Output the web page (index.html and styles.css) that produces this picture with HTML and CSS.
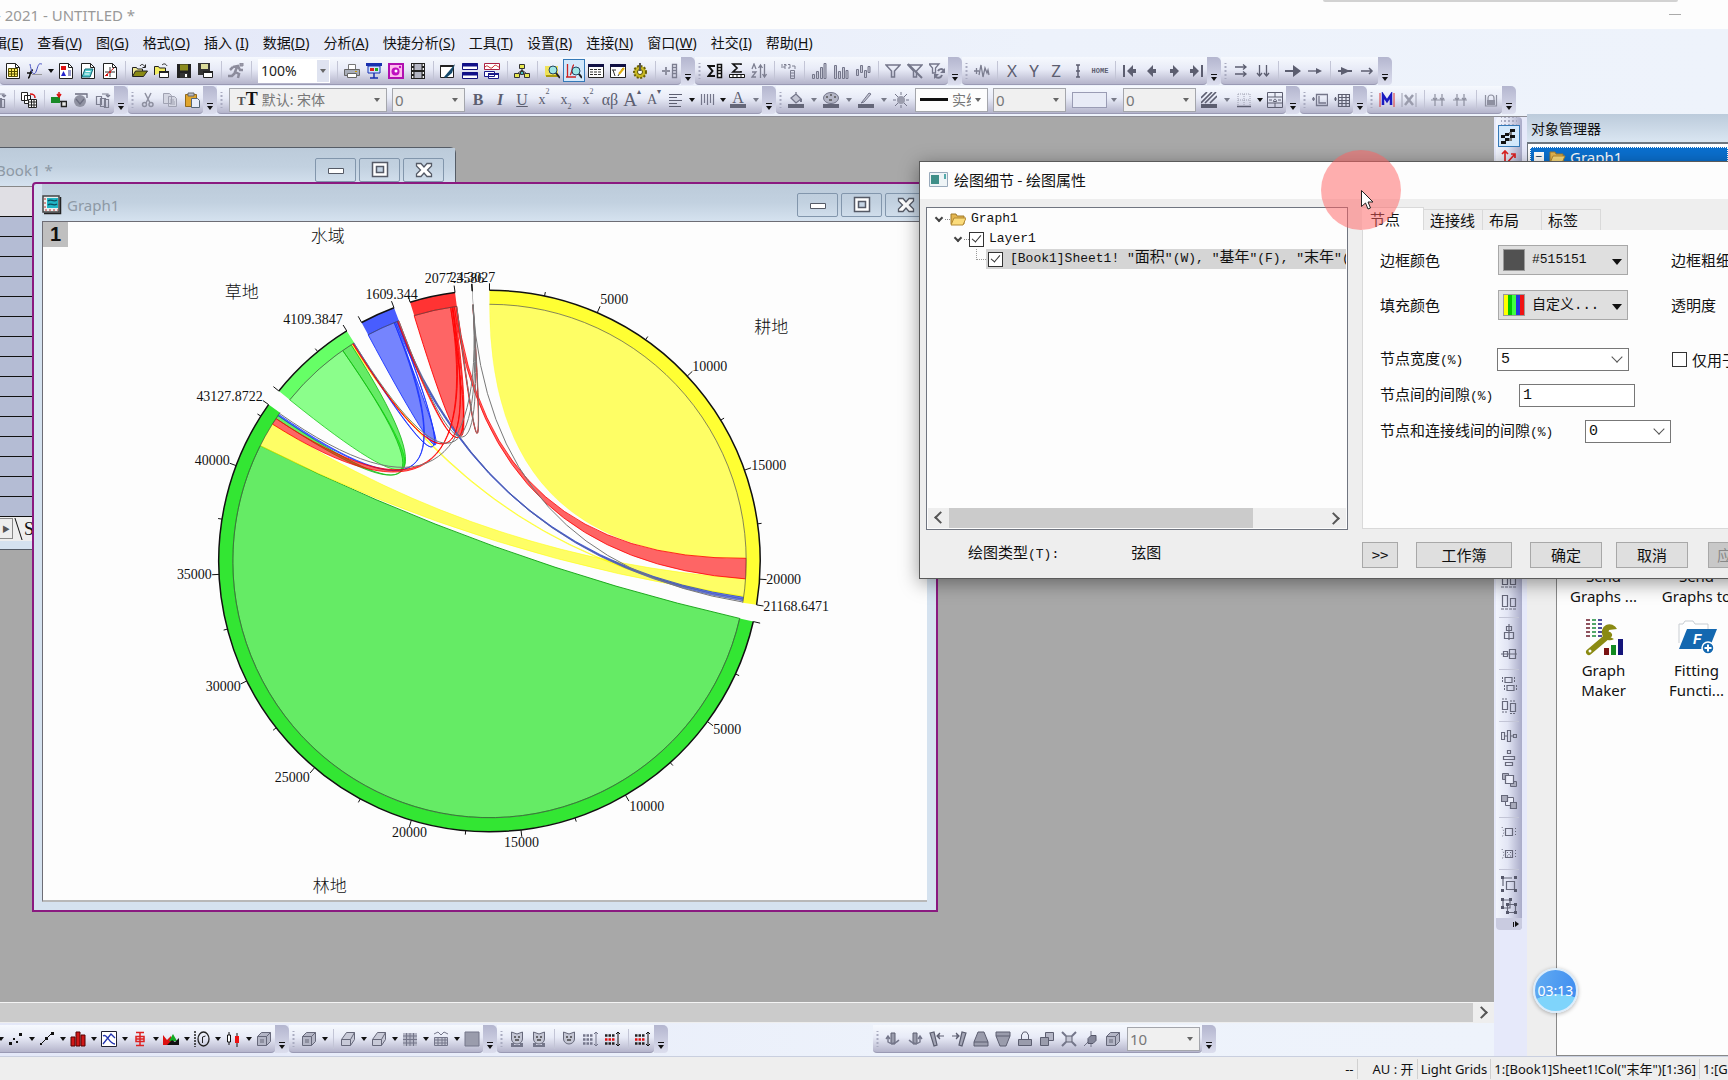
FILE: index.html
```html
<!DOCTYPE html>
<html lang="zh-CN">
<head>
<meta charset="utf-8">
<title>2021 - UNTITLED *</title>
<link rel="stylesheet" href="styles.css">
</head>
<body>
<svg class="defs" aria-hidden="true">
  <symbol id="page" viewBox="0 0 16 16"><path d="M1.5.5h9l4 4v11h-13z" fill="#fff" stroke="#222"/><path d="M10.5.5v4h4" fill="none" stroke="#222"/></symbol>
  <symbol id="grid" viewBox="0 0 16 16"><use href="#page"/><path d="M3.5 5.500h9v8h-9zM3.500 8.500h9M3.500 11h9M6.500 5.500v8M9.500 5.500v8" fill="#ffee60" stroke="#554d00"/></symbol>
  <symbol id="fx" viewBox="0 0 16 16"><path d="M1 15c3 0 1-8 5-8M0 10h5" fill="none" stroke="#111" stroke-width="1.500"/><path d="M3 1c2 12 5 12 7 5s3-5 5-5" fill="none" stroke="#4650c0"/><path d="M5 11.500h10" stroke="#999"/></symbol>
  <symbol id="docr" viewBox="0 0 16 16"><use href="#page"/><path d="M3 3h5v4H3z" fill="#d11"/><path d="M3 13l2.500-5L8 13z" fill="#22c"/><path d="M10 8h3M10 10h3M10 12h3" stroke="#339"/></symbol>
  <symbol id="docc" viewBox="0 0 16 16"><use href="#page"/><path d="M5 6h8l-3 8H2z" fill="#5cc" stroke="#167"/><path d="M5.500 8.500h5M4.500 11h5" stroke="#fff"/></symbol>
  <symbol id="docp" viewBox="0 0 16 16"><use href="#page"/><path d="M3 13L12 5" stroke="#b22"/><path d="M8 4v10M3 9h10" stroke="#333"/><path d="M4 11h2v2H4zM7 8h2v2H7z" fill="#d11"/></symbol>
  <symbol id="open" viewBox="0 0 16 16"><path d="M.5 13V4.500h4l1 1.500h5v2" fill="#f2ec9a" stroke="#222"/><path d="M.5 13.500l3-5.500h12l-4 5.500z" fill="#8a8a14" stroke="#222"/><path d="M8 3c2-3 4-1 5 1M13.500 1.500V4.500h-3" fill="none" stroke="#222"/></symbol>
  <symbol id="open2" viewBox="0 0 16 16"><path d="M.5 12V3.500h4l1 1.500h6v3" fill="#f2ec60" stroke="#222"/><path d="M5.500 8.500h9v6h-9z" fill="#fff" stroke="#222"/><path d="M5 9h10" stroke="#222" stroke-width="2"/><path d="M8 2c2-2 4-1 5 1" fill="none" stroke="#222"/></symbol>
  <symbol id="save" viewBox="0 0 16 16"><path d="M1 1h14v14H1z" fill="#222"/><path d="M4 1.500h8v6H4z" fill="#8c8c20"/><path d="M4 10h8v5H4z" fill="#333"/><path d="M9 11h2v3H9z" fill="#fff"/></symbol>
  <symbol id="save2" viewBox="0 0 16 16"><path d="M0 0h12v12H0z" fill="#333"/><path d="M3 1h7v5H3z" fill="#d9da9a"/><path d="M5.500 8.500h9v6h-9z" fill="#fff" stroke="#222"/><path d="M5 9h10" stroke="#222" stroke-width="2"/></symbol>
  <symbol id="run" viewBox="0 0 16 16"><path d="M12 0h3v3h-3z" fill="#9a9aa8" stroke="#8c8c9c"/><path d="M5 4l5-1 2 4h3M9 4L7 9l4 2-1 4M7 10l-3 3H0M2 7l3-3" fill="none" stroke="#8c8c9c" stroke-width="2.500"/></symbol>
  <symbol id="print" viewBox="0 0 16 16"><path d="M4.500 6V1.500h7V6" fill="#fff" stroke="#777"/><path d="M.5 6.500h15v6H.5z" fill="#a8adb8" stroke="#666"/><path d="M3.500 10.500h9v4h-9z" fill="#fff" stroke="#666"/><path d="M11 8h2v1h-2z" fill="#c90"/></symbol>
  <symbol id="slide" viewBox="0 0 16 16"><path d="M0 1.500h16" stroke="#1830b0" stroke-width="3"/><path d="M2 3h12v7H2z" fill="#cfe4ff" stroke="#1830b0"/><path d="M4 5h4v3H4z" fill="#d22"/><path d="M9 5h3v3H9z" fill="#2a2"/><path d="M8 10v5M4 15h8" stroke="#1830b0" stroke-width="1.500"/></symbol>
  <symbol id="pink" viewBox="0 0 16 16"><path d="M1 1h14v14H1z" fill="#fbe" stroke="#b010b0" stroke-width="2"/><circle cx="7.500" cy="8.500" r="4" fill="#c010c0"/><circle cx="8" cy="8" r="1.500" fill="#fff"/><circle cx="12" cy="4" r="1.200" fill="#c010c0"/></symbol>
  <symbol id="film" viewBox="0 0 16 16"><path d="M1 0h14v16H1z" fill="#222"/><path d="M4.500 1h7v6h-7zM4.500 9h7v6h-7z" fill="#b4b6c4"/><path d="M2.700 1v15M13.300 1v15" stroke="#fff" stroke-width="1.300" stroke-dasharray="2 2"/></symbol>
  <symbol id="pen" viewBox="0 0 16 16"><path d="M.5 2.500h13v12H.5z" fill="#fff" stroke="#222"/><path d="M.5 3h13" stroke="#222" stroke-width="2"/><path d="M4 14L15 1l-3 9-6 5z" fill="#154a6c"/></symbol>
  <symbol id="bars" viewBox="0 0 16 16"><path d="M.5.500h15v6H.5zM.5 9.500h15v6H.5z" fill="#fff" stroke="#11117a"/><path d="M0 2h16M0 11h16" stroke="#11118a" stroke-width="3"/></symbol>
  <symbol id="waves" viewBox="0 0 16 16"><path d="M.5.500h15v6H.5z" fill="#fff" stroke="#a24"/><path d="M1 4c3-4 5 4 8 0s4 0 6 0" fill="none" stroke="#c33"/><path d="M.5 8.500h10v5H.5zM4.500 10.500h10v5h-10z" fill="#fff" stroke="#1a1a8a"/><path d="M4 11h11" stroke="#1a1a8a" stroke-width="2"/></symbol>
  <symbol id="org" viewBox="0 0 16 16"><path d="M8 4v4M3 11l5-4 5 4" stroke="#333" fill="none"/><path d="M5.500 1.500h5v4h-5zM.5 10.500h5v4h-5zM10.500 10.500h5v4h-5z" fill="#e8e850" stroke="#333"/><path d="M6.500 8.500h3v3h-3z" fill="#4bb" stroke="#333"/></symbol>
  <symbol id="find" viewBox="0 0 16 16"><path d="M1 3h13v10H1z" fill="#efe25a"/><path d="M2 13h12" stroke="#aa9a10" stroke-width="2"/><circle cx="9" cy="7" r="4" fill="#9fe6e6" stroke="#246"/><path d="M12 10l4 5" stroke="#222" stroke-width="2"/></symbol>
  <symbol id="findp" viewBox="0 0 16 16"><path d="M1.500 1v13M0 14h10M4 12c2-1 2-10 4-10" fill="none" stroke="#c22" stroke-width="1.300"/><circle cx="10" cy="8" r="4" fill="#9fe6e6" stroke="#246"/><path d="M13 11l3 4" stroke="#222" stroke-width="2"/></symbol>
  <symbol id="list" viewBox="0 0 16 16"><path d="M.5 1.500h15v13H.5z" fill="#fff" stroke="#222"/><path d="M0 2.500h16" stroke="#114" stroke-width="3"/><path d="M2 6.500h12M2 9h12M2 11.500h12" stroke="#333" stroke-dasharray="3 1"/></symbol>
  <symbol id="listp" viewBox="0 0 16 16"><path d="M.5 1.500h15v13H.5z" fill="#fff" stroke="#222"/><path d="M0 2.500h16" stroke="#114" stroke-width="3"/><path d="M2 7h4M3 7l2 6M8 13l5-8" stroke="#333"/><path d="M9 11l5-6" stroke="#e0b010" stroke-width="2"/></symbol>
  <symbol id="gear" viewBox="0 0 16 16"><circle cx="8" cy="9" r="6" fill="#c8b820" stroke="#6a6008" stroke-width="2" stroke-dasharray="2 1.500"/><circle cx="8" cy="9" r="2.500" fill="#fff" stroke="#554d00"/><path d="M8 0v8" stroke="#555" stroke-width="2"/></symbol>
  <symbol id="addcol" viewBox="0 0 16 16"><path d="M0 8h8M4 4v8" stroke="#8e90a0" stroke-width="2"/><path d="M10.500 1.500h4v13h-4zM10.500 4.500h4M10.500 7.500h4M10.500 10.500h4" fill="none" stroke="#7c7e90" stroke-width="1.300"/></symbol>
  <symbol id="sumc" viewBox="0 0 16 16"><path d="M8 3H1.500l4 5-4 5H8" fill="none" stroke="#111" stroke-width="2"/><path d="M10.500 1.500h4v13h-4zM10.500 4.500h4M10.500 7.500h4M10.500 10.500h4" fill="#fff" stroke="#111" stroke-width="1.500"/></symbol>
  <symbol id="sumr" viewBox="0 0 16 16"><path d="M12 2V1H4l4 4-4 4h8V8" fill="none" stroke="#111" stroke-width="1.700"/><path d="M.5 11.500h15v3H.5zM4 11v4M8 11v4M12 11v4" fill="#fff" stroke="#111"/></symbol>
  <symbol id="sort" viewBox="0 0 16 16"><path d="M1 6l2-5 2 5M1 9h4L1 14h4M9.500 2v13M7.500 5l2-3 2 3M13.500 1v13M11.500 11l2 3 2-3" fill="none" stroke="#7c7e90" stroke-width="1.300"/></symbol>
  <symbol id="num" viewBox="0 0 16 16"><path d="M1 1v4M3 1.500h2v1.500H3V5h2M7 1.500h2V5H7M11 3h3v3" fill="none" stroke="#7c7e90"/><path d="M9.500 7.500h4v8h-4zM9.500 10h4M9.500 13h4" fill="none" stroke="#7c7e90"/></symbol>
  <symbol id="hist" viewBox="0 0 16 16"><path d="M1.500 11.500h2v4h-2zM5.500 8.500h2v7h-2zM9.500 4.500h2v11h-2zM13 .5h2v15h-2z" fill="#c4c6d4" stroke="#74768a"/></symbol>
  <symbol id="hist2" viewBox="0 0 16 16"><path d="M1.500 2.500h2v13h-2zM5.500 8.500h2v7h-2zM9.500 4.500h2v11h-2zM13 7.500h2v8h-2z" fill="#c4c6d4" stroke="#74768a"/></symbol>
  <symbol id="hist3" viewBox="0 0 16 16"><path d="M1.500 6.500h2v6h-2zM5.500 2.500h2v7h-2zM9.500 7.500h2v7h-2zM13 3.500h2v6h-2z" fill="#c4c6d4" stroke="#74768a"/></symbol>
  <symbol id="fun" viewBox="0 0 16 16"><path d="M1 2h14L9.500 8v6h-3V8z" fill="none" stroke="#74768a" stroke-width="1.500"/></symbol>
  <symbol id="funx" viewBox="0 0 16 16"><use href="#fun"/><path d="M1 1l14 14" stroke="#74768a" stroke-width="2"/></symbol>
  <symbol id="funr" viewBox="0 0 16 16"><path d="M0 1h10L6.500 5v5h-3V5z" fill="none" stroke="#74768a" stroke-width="1.300"/><path d="M6 13c2 3 6 2 7-1M15 8c-2-3-5-2-6 0" fill="none" stroke="#74768a" stroke-width="2"/><path d="M16 5v5h-5zM5 16v-5h5z" fill="#74768a"/></symbol>
  <symbol id="wave" viewBox="0 0 16 16"><path d="M0 8h5M2.500 5v6M5 12l2-10 2 12 2-9 2 5 1-3 1 5" fill="none" stroke="#7c7e90" stroke-width="1.300"/></symbol>
  <symbol id="ibar" viewBox="0 0 16 16"><path d="M6 2h4M8 2v12M6 14h4M6 8h4" stroke="#5c5e70" stroke-width="1.500"/></symbol>
  <symbol id="first" viewBox="0 0 16 16"><path d="M1 2h2v12H1zM5 8l6-6v4h3v4h-3v4z" fill="#5c5e70"/></symbol>
  <symbol id="prev" viewBox="0 0 16 16"><path d="M3 8l6-6v4h3v4H9v4z" fill="#5c5e70"/></symbol>
  <symbol id="next" viewBox="0 0 16 16"><path d="M13 8L7 2v4H4v4h3v4z" fill="#5c5e70"/></symbol>
  <symbol id="last" viewBox="0 0 16 16"><path d="M15 2h-2v12h2zM11 8L5 2v4H2v4h3v4z" fill="#5c5e70"/></symbol>
  <symbol id="rr" viewBox="0 0 16 16"><path d="M2 4h11M10 1.500L13 4l-3 2.500M2 11h11M10 8.500l3 2.500-3 2.500" fill="none" stroke="#5c5e70" stroke-width="1.300"/></symbol>
  <symbol id="dd" viewBox="0 0 16 16"><path d="M4.500 2v11M2 10l2.500 3L7 10M11.500 2v11M9 10l2.500 3 2.500-3" fill="none" stroke="#5c5e70" stroke-width="1.300"/></symbol>
  <symbol id="ra" viewBox="0 0 16 16"><path d="M0 7h8V2l8 6-8 6V9H0z" fill="#5c5e70"/></symbol>
  <symbol id="rb" viewBox="0 0 16 16"><path d="M1 8h10" stroke="#5c5e70" stroke-width="1.300"/><path d="M9 5l6 3-6 3z" fill="#5c5e70"/></symbol>
  <symbol id="rc" viewBox="0 0 16 16"><path d="M1 7h14v2H1z" fill="#5c5e70"/><path d="M4 4l9 4-9 4z" fill="#5c5e70"/></symbol>
  <symbol id="rd" viewBox="0 0 16 16"><path d="M2 8h11M10 5l3 3-3 3" fill="none" stroke="#5c5e70" stroke-width="1.500"/></symbol>
  <symbol id="batch" viewBox="0 0 16 16"><path d="M.5.500h6v8h-6zM3.500 3.500h6v8h-6z" fill="#fff" stroke="#222"/><path d="M7.500 7.500h8v8h-8zM7.500 10h8M7.500 13h8M10.500 7.500v8M13 7.500v8" fill="#fff" stroke="#222"/><path d="M9 2c4 0 5 1 5 4" fill="none" stroke="#d11" stroke-width="1.500"/></symbol>
  <symbol id="gdoc" viewBox="0 0 16 16"><path d="M1.500 4.500h5v8h-5zM5.500 6.500h5v8h-5zM9.500 7.500h4v8h-4zM7 2h6v3M11 3l2 2 2-2" fill="none" stroke="#7c7e90" stroke-width="1.200"/></symbol>
  <symbol id="plug" viewBox="0 0 16 16"><path d="M0 5h9v6H0z" fill="#188a28"/><path d="M9 9.500h6.500v5h-5V9" fill="#e8e8e8" stroke="#222" stroke-width="1.500"/><path d="M8 0v4M6 2l2 3 2-3" stroke="#d11" stroke-width="1.500" fill="none"/></symbol>
  <symbol id="globe" viewBox="0 0 16 16"><circle cx="7" cy="9" r="6" fill="#9092a2"/><path d="M3 7l4 5 4-5M2 2h12v4" fill="none" stroke="#6c6e80" stroke-width="1.300"/></symbol>
  <symbol id="cut" viewBox="0 0 16 16"><path d="M5 1l5 10M11 1L6 11" stroke="#8e90a0" stroke-width="1.500"/><circle cx="4.500" cy="12.500" r="2" fill="none" stroke="#8e90a0" stroke-width="1.500"/><circle cx="11" cy="12.500" r="2" fill="none" stroke="#8e90a0" stroke-width="1.500"/></symbol>
  <symbol id="copy" viewBox="0 0 16 16"><path d="M1.500 1.500h6l2 2v8h-8zM6.500 4.500h6l2 2v8h-8z" fill="#d4d6e2" stroke="#a0a2b2"/><path d="M8 8h4M8 10h5M8 12h5" stroke="#a0a2b2"/></symbol>
  <symbol id="paste" viewBox="0 0 16 16"><path d="M1.500 2.500h11v12h-11z" fill="#e0a52c" stroke="#92691a"/><path d="M4 1h6v3H4z" fill="#b9bcc4" stroke="#666"/><path d="M7.500 6.500h6l2 2v7h-8z" fill="#e8eefb" stroke="#567"/></symbol>
  <symbol id="left" viewBox="0 0 16 16"><path d="M1 2.500h13M1 5.500h8M1 8.500h13M1 11.500h8M1 14.500h12" stroke="#5c5e70" stroke-width="1.200"/></symbol>
  <symbol id="vert" viewBox="0 0 16 16"><path d="M2.500 2v11M5.500 2v9M8.500 2v11M11.500 2v9M14.500 2v11" stroke="#74768a" stroke-width="1.200"/></symbol>
  <symbol id="bucket" viewBox="0 0 16 16"><path d="M3 6l5-4 5 5-5 4zM8 2V0" fill="#c4c6d4" stroke="#74768a" stroke-width="1.300"/><path d="M13 7v3" stroke="#74768a" stroke-width="2"/><path d="M0 12h16v4H0z" fill="#646678"/></symbol>
  <symbol id="pal" viewBox="0 0 16 16"><ellipse cx="8" cy="6" rx="7.500" ry="5.500" fill="#b4b6c6" stroke="#74768a"/><path d="M3 5h2M7 3h2M11 5h2M6 8h3" stroke="#555" stroke-width="1.500"/><path d="M0 12h16v4H0z" fill="#646678"/></symbol>
  <symbol id="lin" viewBox="0 0 16 16"><path d="M4 10l7-9 2 1-7 8-3 1z" fill="#c4c6d4" stroke="#74768a"/><path d="M0 12h16v4H0z" fill="#646678"/></symbol>
  <symbol id="sun" viewBox="0 0 16 16"><circle cx="8" cy="8" r="4" fill="#9a9cac"/><path d="M8 0v3M8 13v3M0 8h3M13 8h3M2 2l3 3M11 11l3 3M14 2l-3 3M2 14l3-3" stroke="#74768a"/></symbol>
  <symbol id="hatch" viewBox="0 0 16 16"><path d="M0 6l6-6M0 11L11 0M4 11L15 0M9 11l7-7" stroke="#5c5e70" stroke-width="1.600"/><path d="M0 12h16v4H0z" fill="#5c5e70"/></symbol>
  <symbol id="bord" viewBox="0 0 16 16"><path d="M2 2h12v11M2 2v11M8 2v11M2 8h12" fill="none" stroke="#a0a2b2" stroke-dasharray="1 1"/><path d="M1 14.500h14" stroke="#5c5e70" stroke-width="1.500"/></symbol>
  <symbol id="tabl" viewBox="0 0 16 16"><path d="M.5.500h15v15H.5zM.5 5h15M.5 11h15M8 1v4M8 11v4M2 8h3M11 8h3M6.500 9.500c0-3 3-3 3 0z" fill="none" stroke="#5c5e70"/></symbol>
  <symbol id="ax" viewBox="0 0 16 16"><path d="M0 7h3M1.500 5v4M4.500 2.500h11v11h-11zM7 4v7h7" fill="none" stroke="#74768a" stroke-width="1.300"/></symbol>
  <symbol id="gr2" viewBox="0 0 16 16"><path d="M0 7h3M1.500 5v4M4.500 2.500h11v12h-11zM4.500 5.500h11M4.500 8.500h11M4.500 11.500h11M8 2v12M12 2v12" fill="none" stroke="#5c5e70" stroke-width="1.200"/></symbol>
  <symbol id="em" viewBox="0 0 16 16"><path d="M1 1v14M15 1v14" stroke="#d33"/><path d="M4 13V3l4 6 4-6v10" fill="none" stroke="#1a1ac0" stroke-width="2.500"/></symbol>
  <symbol id="ex" viewBox="0 0 16 16"><path d="M1 1v14M15 1v14" stroke="#a0a2b2"/><path d="M4 3l8 10M12 3L4 13" fill="none" stroke="#9a9cac" stroke-width="2.500"/></symbol>
  <symbol id="arr" viewBox="0 0 16 16"><path d="M4 2v12M2 6l2 2 2-2M11 2v12M9 6l2 2 2-2M0 8h14" fill="none" stroke="#8e90a0" stroke-width="1.200"/></symbol>
  <symbol id="lock" viewBox="0 0 16 16"><path d="M5 8V6a3 3 0 016 0v2M2.500 3v11h11V3" fill="none" stroke="#8e90a0" stroke-width="1.200"/><path d="M4 8h8v5H4z" fill="#8e90a0"/></symbol>
  <symbol id="scat" viewBox="0 0 16 16"><path d="M1 11h3v3H1zM5 7h2v2H5zM8 10h2v2H8zM11 2h3v3h-3z" fill="#111"/></symbol>
  <symbol id="lpt" viewBox="0 0 16 16"><path d="M2 13L13 2" stroke="#111"/><path d="M1 12h2v2H1zM6 6h3v3H6zM12 1h3v3h-3z" fill="#111"/></symbol>
  <symbol id="cols" viewBox="0 0 16 16"><path d="M1 6h4v9H1zM6 1h4v14H6zM11 4h4v11h-4z" fill="#d01818" stroke="#500"/></symbol>
  <symbol id="box" viewBox="0 0 16 16"><path d="M.5.500h15v15H.5z" fill="#fff" stroke="#223"/><path d="M2 13L10 3l4 4M2 5c4-3 6 8 12 8" fill="none" stroke="#2233b0" stroke-width="1.300"/></symbol>
  <symbol id="bx" viewBox="0 0 16 16"><path d="M4 1.500h8M8 1v14M4 14.500h8M4 5.500h8v5H4zM4 8h8" fill="none" stroke="#d22" stroke-width="1.500"/></symbol>
  <symbol id="area" viewBox="0 0 16 16"><path d="M0 14V4l4 5 4-4v9z" fill="#d11"/><path d="M6 10l4-7 4 7z" fill="#1a2"/><path d="M4 14l5-5 3 2 4-4v7z" fill="#111"/></symbol>
  <symbol id="polar" viewBox="0 0 16 16"><path d="M1 0v16" stroke="#222" stroke-width="1.500" stroke-dasharray="2 1"/><ellipse cx="9.500" cy="8" rx="5.500" ry="7" fill="none" stroke="#222" stroke-width="1.300"/><path d="M8.500 12V6l3-1" fill="none" stroke="#222"/></symbol>
  <symbol id="candle" viewBox="0 0 16 16"><path d="M4 1v3M4 11v3M12 2v14" stroke="#111"/><path d="M2.500 4h3v7h-3z" fill="#fff" stroke="#111"/><path d="M10 5h4v7h-4z" fill="#e11"/></symbol>
  <symbol id="cube" viewBox="0 0 16 16"><path d="M1.500 5.500l4-4h9v9l-4 4h-9zM1.500 5.500h9v9M10.500 5.500l4-4" fill="#b4b6c6" stroke="#66687a"/><path d="M4 8h4v4H4z" fill="#8e90a0"/></symbol>
  <symbol id="cube2" viewBox="0 0 16 16"><path d="M1.500 8.500l5-7h8v7l-4 6h-9zM1.500 8.500h9v6M10.500 8.500l4-7" fill="#c8cad8" stroke="#66687a"/></symbol>
  <symbol id="mesh" viewBox="0 0 16 16"><path d="M1 2h14v13H1z" fill="#b4b6c6"/><path d="M1 5h14M1 8.500h14M1 12h14M4.500 2v13M8 2v13M11.500 2v13" stroke="#74768a"/></symbol>
  <symbol id="mesh2" viewBox="0 0 16 16"><path d="M1 3l4-2 3 3 3-3 4 2" fill="none" stroke="#74768a"/><path d="M1.500 6.500h13v8h-13zM1 9h14M1 12h14M5 6v8M9 6v8M12 6v8" fill="#c4c6d4" stroke="#74768a"/></symbol>
  <symbol id="solid" viewBox="0 0 16 16"><path d="M1 1h14v14H1z" fill="#9a9cac" stroke="#74768a"/></symbol>
  <symbol id="mask" viewBox="0 0 16 16"><path d="M2.500 1v7c0 3 3 5 5.500 5s5.500-2 5.500-5V1L8 3z" fill="#c4c6d4" stroke="#66687a"/><path d="M5 6h2M9 6h2M6 9h4" stroke="#444" stroke-width="1.500"/></symbol>
  <symbol id="mask2" viewBox="0 0 16 16"><use href="#mask"/><path d="M2 15h12M2 13h3M11 13h3" stroke="#74768a" stroke-width="2"/></symbol>
  <symbol id="dotg" viewBox="0 0 16 16"><path d="M0 4.500h10M0 8.500h10M0 12.500h10" stroke="#74768a" stroke-width="2.500" stroke-dasharray="2.500 1"/><path d="M13 1v14M11 3l2-2 2 2M11 13l2 2 2-2" fill="none" stroke="#74768a"/></symbol>
  <symbol id="dotr" viewBox="0 0 16 16"><path d="M0 4.500h10M0 12.500h10" stroke="#222" stroke-width="2.500" stroke-dasharray="2.500 1"/><path d="M0 8.500h10" stroke="#d11" stroke-width="2.500" stroke-dasharray="2.500 1"/><path d="M13 1v14M11 3l2-2 2 2M11 13l2 2 2-2" fill="none" stroke="#111"/></symbol>
  <symbol id="rotl" viewBox="0 0 16 16"><path d="M6 2h4v11H6z" fill="#9a9cac" stroke="#5c5e70"/><path d="M3 5v6c4 3 8 1 11-2M1 8l2-3 2 3" fill="none" stroke="#74768a" stroke-width="1.400"/></symbol>
  <symbol id="tilt" viewBox="0 0 16 16"><path d="M1 2l4-1 3 13-3 1zM15 5h-6M11 2L8 5l3 3" fill="#a4a6b6" stroke="#5c5e70" stroke-width="1.200"/></symbol>
  <symbol id="trap" viewBox="0 0 16 16"><path d="M5 1h6l4 10v4H1v-4zM1 11h14" fill="#9a9cac" stroke="#5c5e70"/></symbol>
  <symbol id="trapd" viewBox="0 0 16 16"><path d="M5 15h6l4-10V1H1v4zM1 5h14" fill="#9a9cac" stroke="#5c5e70"/></symbol>
  <symbol id="box2" viewBox="0 0 16 16"><path d="M1.500 8.500h13v6h-13z" fill="#9a9cac" stroke="#5c5e70"/><path d="M4.500 8V4l2-3h3l2 3v4" fill="none" stroke="#5c5e70"/></symbol>
  <symbol id="sq2" viewBox="0 0 16 16"><path d="M6.500 1.500h8v8h-8z" fill="#b4b6c6" stroke="#5c5e70"/><path d="M1.500 6.500h8v8h-8z" fill="#9a9cac" stroke="#5c5e70"/></symbol>
  <symbol id="xp" viewBox="0 0 16 16"><path d="M1 1l4 4M15 1l-4 4M1 15l4-4M15 15l-4-4" stroke="#74768a" stroke-width="2"/><path d="M5 5h6v6H5z" fill="#c4c6d4" stroke="#5c5e70"/></symbol>
  <symbol id="cubes" viewBox="0 0 16 16"><path d="M8 0v16M1 15l6-6" stroke="#74768a"/><path d="M5 7.500l3-3h5v5l-3 3H5z" fill="#85879a" stroke="#55576a"/></symbol>
  <symbol id="steps" viewBox="0 0 16 16"><path d="M0 13h5v3H0zM4 10h4v3H4zM0 7h4v3H0zM4 5h4v3H4zM9 1h5v3H9zM9 7h5v3H9z" fill="#111"/><path d="M8 4h3v3H8zM8 10h3v3H8z" fill="#777"/></symbol>
  <symbol id="redax" viewBox="0 0 16 16"><path d="M4 15V1M1 4l3-3 3 3M4 15L14 4M10 4h4v4" fill="none" stroke="#d22" stroke-width="1.700"/></symbol>
  <symbol id="a1" viewBox="0 0 16 16"><path d="M1.500 1.500h5v11h-5zM9.500 4.500h5v8h-5z" fill="none" stroke="#66687a" stroke-width="1.200"/><path d="M0 15h16" stroke="#66687a" stroke-dasharray="3 1"/></symbol>
  <symbol id="a2" viewBox="0 0 16 16"><path d="M5.500 2.500h5v4h-5zM3.500 8.500h9v6h-9zM8 0v16" fill="none" stroke="#66687a" stroke-width="1.200"/></symbol>
  <symbol id="a3" viewBox="0 0 16 16"><path d="M2.500 5.500h4v5h-4zM8.500 3.500h6v9h-6zM0 8h16" fill="none" stroke="#66687a" stroke-width="1.200"/></symbol>
  <symbol id="a4" viewBox="0 0 16 16"><path d="M4 1.500h7v5H4zM6 9.500h7v5H6z" fill="none" stroke="#66687a" stroke-width="1.200"/><path d="M1.500 1v6M13.500 1v6M3.500 9v6M15.500 9v6" stroke="#66687a" stroke-dasharray="2 1"/></symbol>
  <symbol id="a5" viewBox="0 0 16 16"><path d="M1.500 3.500h5v8h-5zM9.500 5.500h5v8h-5z" fill="none" stroke="#66687a" stroke-width="1.200"/><path d="M1 1h6M9 3h6M1 14h6M9 15.500h6" stroke="#66687a" stroke-dasharray="2 1"/></symbol>
  <symbol id="a6" viewBox="0 0 16 16"><path d="M.5 4.500h3v7h-3zM6.500 2.500h3v11h-3zM12.500 6.500h3v3h-3zM4 8h2M10 8h2" fill="none" stroke="#66687a" stroke-width="1.200"/></symbol>
  <symbol id="a7" viewBox="0 0 16 16"><path d="M6.500.500h3v3h-3zM2.500 6.500h11v3h-11zM4.500 12.500h7v3h-7z" fill="none" stroke="#66687a" stroke-width="1.200"/></symbol>
  <symbol id="a8" viewBox="0 0 16 16"><path d="M1.500 1.500h6v6h-6zM9.500 9.500h6v5h-6z" fill="#aaacbc" stroke="#66687a"/><path d="M4.500 3.500h8v8h-8z" fill="#eceefa" stroke="#66687a" stroke-width="1.200"/></symbol>
  <symbol id="a9" viewBox="0 0 16 16"><path d="M4.500 3.500h8v8h-8z" fill="#eceefa" stroke="#66687a"/><path d="M.5 1.500h6v6h-6zM9.500 8.500h6v6h-6z" fill="#aaacbc" stroke="#66687a" stroke-width="1.200"/></symbol>
  <symbol id="a10" viewBox="0 0 16 16"><path d="M4.500 4.500h7v7h-7z" fill="none" stroke="#66687a" stroke-width="1.200"/><path d="M1 3l2 5-2 6M14.500 4v9" fill="none" stroke="#66687a" stroke-dasharray="1 2"/></symbol>
  <symbol id="a11" viewBox="0 0 16 16"><use href="#a10"/><path d="M6 6h1v1H6zM9 6h1v1H9zM7.500 8h1v1h-1zM6 9.500h1v1H6zM9 9.500h1v1H9z" fill="#66687a"/></symbol>
  <symbol id="a12" viewBox="0 0 16 16"><path d="M2 10V2h9M5.500 5.500h8v8h-8z" fill="none" stroke="#66687a" stroke-width="1.200"/><path d="M0 0h3v3H0zM13 0h3v3h-3zM0 13h3v3H0zM13 13h3v3h-3z" fill="#55576a"/></symbol>
  <symbol id="a13" viewBox="0 0 16 16"><path d="M2 8V2h7v8H2M6.500 6.500h8v8h-8z" fill="none" stroke="#66687a" stroke-width="1.200"/><path d="M0 0h3v3H0zM8 0h3v3H8zM0 8h3v3H0zM5 5h3v3H5zM13 5h3v3h-3zM5 13h3v3H5zM13 13h3v3h-3z" fill="#55576a"/></symbol>
  <symbol id="folder" viewBox="0 0 16 14"><path d="M1 12V2h5l1 2h7v8z" fill="#e4b650" stroke="#a07a2a"/><path d="M1 13l3-7h12l-3 7z" fill="#fbdc7c" stroke="#b48a32"/></symbol>
  <symbol id="wmin" viewBox="0 0 18 18"><path d="M1.500 7.500h15v5h-15z" fill="#fff" stroke="#555a66"/></symbol>
  <symbol id="wmax" viewBox="0 0 18 18"><path d="M1.500 1.500h15v14h-15z" fill="#fff" stroke="#555a66" stroke-width="1.500"/><path d="M5.500 5.500h7v6h-7z" fill="#c6d5e4" stroke="#555a66" stroke-width="1.500"/></symbol>
  <symbol id="wcls" viewBox="0 0 18 18"><path d="M1.500 2.500h4.500L9 6l3-3.500h4.500V5L12.500 9l4 4v2.500H12L9 12l-3 3.500H1.500V13l4-4-4-4z" fill="#fff" stroke="#555a66" stroke-width="1.300"/></symbol>
</svg>

<div class="app">
  <header class="titlebar"><span>- 2021 - UNTITLED *</span><button class="appmin" aria-label="最小化"></button></header>
  <nav class="menubar">
    <a href="#">编辑(<u>E</u>)</a><a href="#">查看(<u>V</u>)</a><a href="#">图(<u>G</u>)</a><a href="#">格式(<u>O</u>)</a><a href="#">插入 (<u>I</u>)</a><a href="#">数据(<u>D</u>)</a><a href="#">分析(<u>A</u>)</a><a href="#">快捷分析(<u>S</u>)</a><a href="#">工具(<u>T</u>)</a><a href="#">设置(<u>R</u>)</a><a href="#">连接(<u>N</u>)</a><a href="#">窗口(<u>W</u>)</a><a href="#">社交(<u>I</u>)</a><a href="#">帮助(<u>H</u>)</a>
  </nav>

  <div class="toolrow">
    <div class="band lead">
      <button class="t"><svg><use href="#grid"/></svg></button><button class="t"><svg><use href="#fx"/></svg></button><button class="c"></button><button class="t"><svg><use href="#docr"/></svg></button><button class="t"><svg><use href="#docc"/></svg></button><button class="t"><svg><use href="#docp"/></svg></button><i class="s"></i>
      <button class="t"><svg><use href="#open"/></svg></button><button class="t"><svg><use href="#open2"/></svg></button><button class="t"><svg><use href="#save"/></svg></button><button class="t"><svg><use href="#save2"/></svg></button><i class="s"></i>
      <button class="t"><svg><use href="#run"/></svg></button><i class="s"></i>
      <span class="combo zoom"><select aria-label="缩放"><option>100%</option></select></span><i class="s"></i>
      <button class="t"><svg><use href="#print"/></svg></button><button class="t"><svg><use href="#slide"/></svg></button><button class="t"><svg><use href="#pink"/></svg></button><button class="t"><svg><use href="#film"/></svg></button><i class="s"></i>
      <button class="t"><svg><use href="#pen"/></svg></button><button class="t"><svg><use href="#bars"/></svg></button><button class="t"><svg><use href="#waves"/></svg></button><i class="s"></i>
      <button class="t"><svg><use href="#org"/></svg></button><i class="s"></i>
      <button class="t"><svg><use href="#find"/></svg></button><button class="t on"><svg><use href="#findp"/></svg></button><button class="t"><svg><use href="#list"/></svg></button><button class="t"><svg><use href="#listp"/></svg></button><button class="t"><svg><use href="#gear"/></svg></button><i class="s"></i>
      <button class="t"><svg><use href="#addcol"/></svg></button>
    </div><button class="more"></button>
    <div class="band"><i class="g"></i>
      <button class="t"><svg><use href="#sumc"/></svg></button><button class="t"><svg><use href="#sumr"/></svg></button><button class="t"><svg><use href="#sort"/></svg></button><i class="s"></i>
      <button class="t"><svg><use href="#num"/></svg></button><i class="s"></i>
      <button class="t"><svg><use href="#hist"/></svg></button><button class="t"><svg><use href="#hist2"/></svg></button><button class="t"><svg><use href="#hist3"/></svg></button><i class="s"></i>
      <button class="t"><svg><use href="#fun"/></svg></button><button class="t"><svg><use href="#funx"/></svg></button><button class="t"><svg><use href="#funr"/></svg></button>
    </div><button class="more"></button>
    <div class="band"><i class="g"></i>
      <button class="t"><svg><use href="#wave"/></svg></button><i class="s"></i>
      <button class="t xyz">X</button><button class="t xyz">Y</button><button class="t xyz">Z</button><button class="t"><svg><use href="#ibar"/></svg></button><button class="t home">HOME</button><i class="s"></i>
      <button class="t"><svg><use href="#first"/></svg></button><button class="t"><svg><use href="#prev"/></svg></button><button class="t"><svg><use href="#next"/></svg></button><button class="t"><svg><use href="#last"/></svg></button>
    </div><button class="more"></button>
    <div class="band"><i class="g"></i>
      <button class="t"><svg><use href="#rr"/></svg></button><button class="t"><svg><use href="#dd"/></svg></button><i class="s"></i>
      <button class="t"><svg><use href="#ra"/></svg></button><button class="t"><svg><use href="#rb"/></svg></button><i class="s"></i>
      <button class="t"><svg><use href="#rc"/></svg></button><button class="t"><svg><use href="#rd"/></svg></button>
    </div><button class="more"></button>
  </div>

  <div class="toolrow second">
    <div class="band cut">
      <button class="t"><svg><use href="#gdoc"/></svg></button><i class="s"></i><button class="t"><svg><use href="#batch"/></svg></button><i class="s"></i>
      <button class="t"><svg><use href="#plug"/></svg></button><button class="t"><svg><use href="#globe"/></svg></button><button class="t"><svg><use href="#gdoc"/></svg></button>
    </div><button class="more"></button>
    <div class="band"><i class="g"></i>
      <button class="t"><svg><use href="#cut"/></svg></button><button class="t"><svg><use href="#copy"/></svg></button><button class="t"><svg><use href="#paste"/></svg></button>
    </div><button class="more"></button>
    <div class="band"><i class="g"></i>
      <span class="combo face off"><b class="tt"><span>T</span>T</b><select aria-label="字体" disabled><option>默认: 宋体</option></select></span>
      <span class="combo off"><select aria-label="字号" disabled><option>0</option></select></span>
      <button class="t f"><b>B</b></button><button class="t f"><b><em>I</em></b></button><button class="t f"><u>U</u></button><button class="t f sm">x<sup>2</sup></button><button class="t f sm">x<sub>2</sub></button><button class="t f sm">x<sup>2</sup></button><button class="t f">αβ</button><button class="t f big">A<sup>▴</sup></button><button class="t f sm">A<sup>▾</sup></button>
      <button class="t"><svg><use href="#left"/></svg></button><button class="c"></button><button class="t"><svg><use href="#vert"/></svg></button><button class="c"></button><button class="t f under">A</button><button class="c w dim"></button>
    </div><button class="more"></button>
    <div class="band"><i class="g"></i>
      <button class="t"><svg><use href="#bucket"/></svg></button><button class="c w dim"></button><button class="t"><svg><use href="#pal"/></svg></button><button class="c w dim"></button><button class="t"><svg><use href="#lin"/></svg></button><button class="c w dim"></button><button class="t"><svg><use href="#sun"/></svg></button>
      <span class="combo line"><i></i><select aria-label="线型" disabled><option>实线</option></select></span>
      <span class="combo off"><select aria-label="线宽" disabled><option>0</option></select></span>
      <button class="swatch" aria-label="颜色"></button><button class="c w dim"></button>
      <span class="combo off"><select aria-label="大小" disabled><option>0</option></select></span>
      <button class="t"><svg><use href="#hatch"/></svg></button><button class="c w dim"></button><button class="t"><svg><use href="#bord"/></svg></button><button class="c"></button><button class="t"><svg><use href="#tabl"/></svg></button>
    </div><button class="more"></button>
    <div class="band"><i class="g"></i><button class="t"><svg><use href="#ax"/></svg></button><button class="t"><svg><use href="#gr2"/></svg></button></div><button class="more"></button>
    <div class="band"><i class="g"></i><button class="t"><svg><use href="#em"/></svg></button><button class="t"><svg><use href="#ex"/></svg></button><i class="s"></i><button class="t"><svg><use href="#arr"/></svg></button><button class="t"><svg><use href="#arr"/></svg></button><i class="s"></i><button class="t"><svg><use href="#lock"/></svg></button></div><button class="more"></button>
  </div>

  <div class="work">
    <div class="left">
      <main class="mdi">
        <section class="win book">
          <div class="wtitle"><span>Book1 *</span><div class="wbtns"><button><svg><use href="#wmin"/></svg></button><button><svg><use href="#wmax"/></svg></button><button><svg><use href="#wcls"/></svg></button></div></div>
          <div class="sheet"></div>
          <div class="tabs"><button aria-label="下一个">▶</button><i></i><span>Sheet1</span></div>
        </section>
        <section class="win graph">
          <div class="wtitle"><svg class="gicon" viewBox="0 0 20 20"><path d="M1 1h16v16H1z" fill="#e8f0f0" stroke="#444" stroke-width="1.500"/><path d="M5 3h11v10H5z" fill="#20b4c4"/><path d="M6 6c3-3 5 2 9-1M6 10c3-3 5 2 9-1" fill="none" stroke="#104c60" stroke-width="1.300"/><path d="M3 3v12h13" fill="none" stroke="#b33" stroke-dasharray="2 2"/><path d="M2 18.500h16.500V2" fill="none" stroke="#222" stroke-width="1.500"/></svg><span>Graph1</span><div class="wbtns"><button><svg><use href="#wmin"/></svg></button><button><svg><use href="#wmax"/></svg></button><button><svg><use href="#wcls"/></svg></button></div></div>
          <div class="canvas"><b class="layer">1</b><svg id="chord" viewBox="43 222 885 678" role="img" aria-label="弦图"></svg></div>
        </section>
      </main>
      <div class="hscroll"><span></span><button aria-label="向右"></button></div>
      <div class="toolrow bottom">
        <div class="band cut2">
          <button class="c"></button><button class="t"><svg><use href="#scat"/></svg></button><button class="c"></button><button class="t"><svg><use href="#lpt"/></svg></button><button class="c"></button><button class="t"><svg><use href="#cols"/></svg></button><button class="c"></button><button class="t"><svg><use href="#box"/></svg></button><button class="c"></button><button class="t"><svg><use href="#bx"/></svg></button><button class="c"></button><button class="t"><svg><use href="#area"/></svg></button><button class="c"></button><button class="t"><svg><use href="#polar"/></svg></button><button class="c"></button><button class="t"><svg><use href="#candle"/></svg></button><button class="c"></button><button class="t"><svg><use href="#cube"/></svg></button>
        </div><button class="more"></button>
        <div class="band"><i class="g"></i>
          <button class="t"><svg><use href="#cube"/></svg></button><button class="c"></button><i class="s"></i><button class="t"><svg><use href="#cube2"/></svg></button><button class="c"></button><button class="t"><svg><use href="#cube2"/></svg></button><button class="c"></button><button class="t"><svg><use href="#mesh"/></svg></button><button class="c"></button><button class="t"><svg><use href="#mesh2"/></svg></button><button class="c"></button><button class="t"><svg><use href="#solid"/></svg></button>
        </div><button class="more"></button>
        <div class="band"><i class="g"></i>
          <button class="t"><svg><use href="#mask2"/></svg></button><button class="t"><svg><use href="#mask2"/></svg></button><i class="s"></i><button class="t"><svg><use href="#mask"/></svg></button><button class="t"><svg><use href="#dotg"/></svg></button><button class="t"><svg><use href="#dotr"/></svg></button><i class="s"></i><button class="t"><svg><use href="#dotr"/></svg></button>
        </div><button class="more"></button>
        <div class="band apart"><i class="g"></i>
          <button class="t"><svg><use href="#rotl"/></svg></button><button class="t flip"><svg><use href="#rotl"/></svg></button><button class="t"><svg><use href="#tilt"/></svg></button><button class="t flip"><svg><use href="#tilt"/></svg></button><button class="t"><svg><use href="#trap"/></svg></button><button class="t"><svg><use href="#trapd"/></svg></button><button class="t"><svg><use href="#box2"/></svg></button><button class="t"><svg><use href="#sq2"/></svg></button><button class="t"><svg><use href="#xp"/></svg></button><button class="t"><svg><use href="#cubes"/></svg></button><button class="t"><svg><use href="#cube"/></svg></button>
          <span class="combo off"><select aria-label="角度" disabled><option>10</option></select></span>
        </div><button class="more"></button>
      </div>
    </div>

    <aside class="strip">
      <div class="vband">
        <i class="vg"></i>
        <button class="t on"><svg><use href="#steps"/></svg></button><button class="t"><svg><use href="#redax"/></svg></button>
        <div class="rest"></div>
        <button class="t"><svg><use href="#a1"/></svg></button><button class="t"><svg><use href="#a1"/></svg></button><i class="vs"></i>
        <button class="t"><svg><use href="#a2"/></svg></button><button class="t"><svg><use href="#a3"/></svg></button><i class="vs"></i>
        <button class="t"><svg><use href="#a4"/></svg></button><button class="t"><svg><use href="#a5"/></svg></button><i class="vs"></i>
        <button class="t"><svg><use href="#a6"/></svg></button><button class="t"><svg><use href="#a7"/></svg></button><button class="t"><svg><use href="#a8"/></svg></button><button class="t"><svg><use href="#a9"/></svg></button><i class="vs"></i>
        <button class="t"><svg><use href="#a10"/></svg></button><button class="t"><svg><use href="#a11"/></svg></button><i class="vs"></i>
        <button class="t"><svg><use href="#a12"/></svg></button><button class="t"><svg><use href="#a13"/></svg></button>
        <button class="vmore"></button>
      </div>
    </aside>

    <aside class="panes">
      <h2>对象管理器</h2>
      <div class="objtree"><div><i>−</i><svg><use href="#folder"/></svg>Graph1</div></div>
      <div class="apps">
        <a href="#"><svg></svg>Send<br>Graphs ...</a>
        <a href="#"><svg></svg>Send<br>Graphs to</a>
        <a href="#"><svg viewBox="0 0 40 38"><path d="M2 2h4M2 6h4M2 10h4M2 14h4M2 18h4" stroke="#6a1a2a" stroke-width="1.500"/><path d="M8 2h4M8 6h4M8 10h4M8 14h4M8 18h4" stroke="#1a8a3a" stroke-width="1.500"/><path d="M14 2h4M14 6h4M14 10h4M14 14h4M14 18h4" stroke="#14147a" stroke-width="1.500"/><path d="M5 34L25 17" stroke="#8a8a12" stroke-width="6" stroke-linecap="round"/><path d="M33 11a8 8 0 10-3 10l-6-3 1-6z" fill="#8a8a12"/><circle cx="6" cy="33" r="1.500" fill="#fff"/><path d="M20 30h5v7h-5z" fill="#7a1212"/><path d="M27 27h5v10h-5z" fill="#128a20"/><path d="M34 21h5v16h-5z" fill="#14147a"/></svg>Graph<br>Maker</a>
        <a href="#"><svg viewBox="0 0 40 38"><path d="M2 25V6h4l2-3h8l2 3h13v6" fill="#fff" stroke="#c8cdd2"/><path d="M10 11h30l-8 20H2z" fill="#1468b0"/><circle cx="31" cy="30" r="6" fill="#1468b0" stroke="#fff" stroke-width="1.500"/><path d="M31 26.500v7M27.500 30h7" stroke="#fff" stroke-width="2"/><text x="16" y="26" font-family="Liberation Sans" font-style="italic" font-weight="700" font-size="14" fill="#fff">F</text></svg>Fitting<br>Functi...</a>
      </div>
    </aside>
  </div>

  <footer class="status"><span>--</span><span>AU : 开</span><span>Light Grids</span><span>1:[Book1]Sheet1!Col("末年")[1:36]</span><span class="end">1:[Graph1]</span></footer>

  <section class="dialog">
    <div class="dtitle"><svg viewBox="0 0 19 15"><path d="M.5.500h18v14H.5z" fill="#eef4f6" stroke="#9ab"/><path d="M2 3h8v9H2z" fill="#3f8f88"/><path d="M15 2h2v5h-2z" fill="#5aa"/></svg>绘图细节 - 绘图属性</div>
    <div class="dbody">
      <div class="dleft">
        <div class="tree">
          <div class="node n1"><i class="ch"></i><i class="dot"></i><svg><use href="#folder"/></svg>Graph1</div>
          <div class="node n2"><i class="ch"></i><i class="dot"></i><label><input type="checkbox" checked>Layer1</label></div>
          <div class="node n3"><i class="elbow"></i><label><input type="checkbox" checked>[Book1]Sheet1! "<span>面积</span>"(W), "<span>基年</span>"(F), "<span>末年</span>"(T)</label></div>
          <div class="tscroll"><button class="lt" aria-label="向左"></button><span></span><button aria-label="向右"></button></div>
        </div>
        <div class="ptype"><span>绘图类型<small>(T):</small></span><span>弦图</span></div>
      </div>
      <div class="dright">
        <div class="dtabs"><button class="cur">节点</button><button>连接线</button><button>布局</button><button>标签</button></div>
        <div class="page">
          <div class="row r1"><span>边框颜色</span><button class="drop"><i class="sw"></i><small>#515151</small></button><span class="r">边框粗细</span></div>
          <div class="row r2"><span>填充颜色</span><button class="drop"><i class="sw many"></i><span class="cust">自定义...</span></button><span class="r">透明度</span></div>
          <div class="row r3"><label for="nw">节点宽度<small>(%)</small></label><span class="box w1"><select id="nw"><option>5</option></select></span><label class="r"><input type="checkbox">仅用于</label></div>
          <div class="row r4"><label for="ng">节点间的间隙<small>(%)</small></label><input id="ng" value="1"></div>
          <div class="row r5"><label for="lg">节点和连接线间的间隙<small>(%)</small></label><span class="box w2"><select id="lg"><option>0</option></select></span></div>
        </div>
        <div class="actions"><button class="b1">&gt;&gt;</button><button class="b2">工作簿</button><button class="b3">确定</button><button class="b3">取消</button><button class="b4" disabled>应用</button></div>
      </div>
    </div>
  </section>

  <div class="pulse"></div>
  <svg class="pointer" viewBox="0 0 12 20"><path d="M.5.500v16l4-3.500 2.500 6 2.500-1-2.500-6h5z" fill="#fff" stroke="#222"/></svg>
  <div class="timer">03:13</div>
  <div class="peek"></div>
</div>
<script src="chart.js"></script>
</body>
</html>
```
FILE: styles.css
```css
* { box-sizing: border-box; }
body { margin: 0; overflow: hidden; font: 14px/20px "Noto Sans", "Noto Sans CJK SC", sans-serif; color: #111; }
button, select, input { font: inherit; color: inherit; margin: 0; padding: 0; border: 0; background: none; border-radius: 0; }
a { color: inherit; text-decoration: none; }
i { font-style: normal; }
.defs { position: absolute; width: 0; height: 0; }
.app { position: relative; height: 100vh; display: flex; flex-direction: column; overflow: hidden; background: #eceffa; }

.titlebar { flex: none; height: 29px; background: #fdfdfd; display: flex; align-items: center; justify-content: space-between; padding: 0 47px 0 0; margin-left: -4px; color: #999; font-size: 15px; white-space: nowrap; }
.appmin { width: 12px; height: 1px; background: #aaa; }
.menubar { flex: none; height: 28px; display: flex; gap: 14px; align-items: center; padding-left: 0; text-indent: 0; white-space: nowrap; background: linear-gradient(90deg, #e3e7f8, #edf2fb 60%, #eef3fb); }
.menubar a:first-child { margin-left: -21px; }

/* toolbars */
.toolrow { flex: none; height: 29px; display: flex; align-items: flex-start; background: linear-gradient(90deg, #e4e8f8, #edf2fb 60%, #eef3fb); }
.toolrow.second { height: 31px; border-bottom: 1px solid #8c8c94; }
.band { flex: none; height: 28px; display: flex; align-items: center; background: linear-gradient(#f6f9fe, #e8ebf7 45%, #b4b4cb); border-bottom: 1px solid #9a9ab4; border-radius: 0 0 4px 4px; }
.band.lead { padding-left: 2px; }
.band.cut { margin-left: -12px; }
.band.cut2 { margin-left: -4px; }
.t { flex: none; width: 22px; height: 23px; display: flex; align-items: center; justify-content: center; white-space: nowrap; color: #5c5e70; }
.t svg { width: 16px; height: 16px; }
.t.on { background: #d3e8fb; border: 1px solid #3579b8; }
.t.flip { transform: scaleX(-1); }
.t.f { font: 16px/20px "Liberation Serif", serif; }
.t.f.sm { font-size: 14px; }
.t.f.big { font-size: 19px; }
.t.f sup, .t.f sub { font-size: 8px; line-height: 8px; }
.t.f sup { align-self: flex-start; }
.t.f sub { align-self: flex-end; }
.t.f.under { height: 17px; border-bottom: 4px solid #646678; line-height: 14px; width: 16px; margin: 0 3px; }
.t.xyz { font-size: 17px; }
.t.home { font: bold 7px/10px "Liberation Mono", monospace; }
.c { flex: none; width: 9px; height: 22px; display: grid; place-items: center; }
.c.w { width: 13px; }
.c::after { content: ""; border: 3px solid transparent; border-top: 4px solid #111; border-bottom: 0; }
.c.dim::after { border-top-color: #777a88; }
.s { flex: none; width: 8px; height: 20px; background: linear-gradient(#c3c5d6, #c3c5d6) center / 1px 100% no-repeat; }
.g { flex: none; width: 9px; height: 16px; background: radial-gradient(circle, #a9abc0 1px, transparent 1px) center / 4px 4px; background-clip: content-box; padding: 0 3px; }
.more { flex: none; width: 14px; height: 28px; background: linear-gradient(#b4b6cf, #dcdeee); border-radius: 0 5px 4px 0; display: flex; flex-direction: column; align-items: center; justify-content: flex-end; gap: 2px; padding-bottom: 4px; }
.more::before { content: ""; width: 6px; height: 1px; background: #111; }
.more::after { content: ""; border: 3px solid transparent; border-top: 4px solid #111; border-bottom: 0; }

.combo { flex: none; position: relative; display: flex; align-items: center; width: 73px; height: 24px; margin: 0 2px 0 3px; border: 1px solid #a4a6ac; background: #f0f0f0; color: #777; overflow: hidden; }
.combo select { appearance: none; flex: 1; min-width: 0; height: 22px; padding-left: 2px; opacity: 1; font-size: 15px; }
.combo::after { content: ""; position: absolute; right: 6px; top: 9px; border: 3px solid transparent; border-top: 4px solid #666; border-bottom: 0; }
.combo.zoom { width: 72px; background: linear-gradient(90deg, #fff 58px, #dfe3f0 58px); border-color: #fff; color: #222; margin-right: 3px; }
.combo.zoom select { font-size: 14px; }
.combo.zoom::after { right: 3px; }
.combo.face { width: 158px; }
.combo.face select { padding-left: 4px; font-size: 14px; }
.combo.line { background: #fdfdfd; }
.combo.line i { width: 28px; height: 3px; background: #111; margin: 0 4px; flex: none; }
.combo.line select { padding: 0; max-width: 19px; font-size: 14px; }
.tt { font: bold 18px/20px "Liberation Serif", serif; color: #111; padding-left: 7px; }
.tt span { font-size: 13px; color: #555; }
.swatch { width: 35px; height: 16px; margin-left: 4px; border: 1px solid #9a9cb4; background: #e8ebf6; }

/* work area */
.work { flex: 1; min-height: 0; display: grid; grid-template-columns: minmax(0, 1fr) 33px 201px; }
.left { display: flex; flex-direction: column; min-width: 0; min-height: 0; }
.mdi { position: relative; flex: 1; overflow: hidden; background: #a8a8a8; }
.hscroll { flex: none; height: 21px; display: flex; border-top: 1px solid #f4f4f4; border-bottom: 1px solid #eee; background: #cbcbcb; }
.hscroll span { flex: 1; }
.hscroll button, .tscroll button { width: 21px; background: #eee; display: grid; place-items: center; }
.hscroll button::after, .tscroll button::after { content: ""; width: 7px; height: 7px; border: solid #555; border-width: 2px 2px 0 0; rotate: 45deg; margin-left: -4px; }
.toolrow.bottom { height: 33px; padding-top: 2px; }
.band.apart { margin-left: 205px; }

.win { position: absolute; background: #d5e2ef; display: flex; flex-direction: column; }
.wtitle { flex: none; height: 38px; display: flex; align-items: center; background: linear-gradient(#bccbda, #c2d1e0 50%, #d5e2ef); color: #8d99a5; font-size: 15px; }
.wbtns { display: flex; gap: 3px; margin-left: auto; }
.wbtns button { width: 41px; height: 24px; border: 1px solid #8296ac; border-radius: 2px; display: grid; place-items: center; }
.wbtns svg { width: 18px; height: 18px; }
.book { left: -10px; top: 30px; width: 466px; height: 403px; border: 1px solid #555c66; border-radius: 0 6px 0 0; }
.book .wtitle { padding: 6px 11px 0 5px; }
.sheet { flex: 1; width: 42px; border-top: 1px solid #888; background: repeating-linear-gradient(#111 0 1px, #b4bcd4 1px 20px) 0 29px / 100% 100% no-repeat, #e0dfe4; }
.tabs { flex: none; height: 32px; display: flex; align-items: flex-start; padding: 1px 0 0 7px; font: 18px/22px "Liberation Serif", serif; background: linear-gradient(#eee 24px, #d5e2ef 24px); }
.tabs button { width: 15px; height: 21px; border: 1px solid #888; background: #eee; font-size: 8px; color: #555; }
.tabs i { width: 1px; height: 22px; background: #111; transform: skewX(18deg); margin: 0 5px; }
.graph { left: 32px; top: 65px; width: 906px; height: 730px; border: 2px solid #8a1a80; border-radius: 4px 0 0 0; padding: 0 9px 8px 8px; }
.graph .wtitle { padding-right: 1px; gap: 5px; padding-top: 4px; height: 37px; }
.gicon { width: 20px; height: 20px; }
.canvas { position: relative; flex: 1; min-height: 0; background: #fdfdfd; border: 1px solid #6d6d75; border-width: 1px 0 2px 1px; border-bottom-color: #b8b8b8; }
.layer { position: absolute; left: 0; top: 0; width: 25px; height: 25px; background: #bfbfbf; font: bold 20px/25px "Liberation Sans", sans-serif; text-align: center; }
#chord { display: block; width: 100%; height: 100%; }
#chord .num { font: 14px "Liberation Serif", serif; fill: #111; }
#chord .name { font: 300 17px "Noto Sans CJK SC", sans-serif; fill: #111; text-anchor: middle; }

.strip { background: #e6e9fa; padding-left: 2px; }
.vband { width: 26px; display: flex; flex-direction: column; align-items: center; background: linear-gradient(90deg, #f2f5fd, #e2e5f4 45%, #a9abc8); border-radius: 4px; }
.vg { width: 16px; height: 8px; background: radial-gradient(circle, #a9abc0 1px, transparent 1px) center / 4px 4px; }
.vs { width: 20px; height: 8px; background: linear-gradient(#c3c5d6, #c3c5d6) center / 100% 1px no-repeat; }
.vband .t { height: 22px; }
.rest { height: 400px; }
.vmore { width: 26px; height: 12px; margin-top: 1px; background: #c9cbe0; border-radius: 0 0 4px 4px; display: flex; align-items: center; justify-content: flex-end; gap: 1px; padding-right: 3px; }
.vmore::before { content: ""; width: 1px; height: 5px; background: #111; }
.vmore::after { content: ""; border: 3px solid transparent; border-left: 4px solid #111; border-right: 0; }

.panes { display: flex; flex-direction: column; background: #eee; min-width: 0; }
.panes h2 { flex: none; margin: -3px 0 0; height: 28px; padding-left: 4px; font: 14px/28px "Noto Sans CJK SC", sans-serif; background: linear-gradient(#bccbdb, #dae6f2); }
.objtree { flex: none; height: 373px; padding: 3px 0 0 2px; border: solid #6d7680; border-width: 2px 0 1px 1px; background: #fff; }
.objtree div { height: 20px; display: flex; align-items: center; gap: 4px; padding-left: 3px; background: #0a70d0; border: 1px dotted #fff; color: #fff; font-size: 15px; }
.objtree i { width: 10px; height: 11px; background: #fff; color: #246; line-height: 10px; font-size: 12px; text-align: center; }
.objtree svg { width: 18px; height: 14px; }
.apps { flex: 1; margin-left: 29px; border-left: 1px solid #888; border-bottom: 1px solid #888; background: #fdfdfd; display: grid; grid-template-columns: 93px 93px; align-content: start; justify-content: start; padding-top: 7px; overflow: hidden; }
.apps a { height: 94px; text-align: center; font-size: 15px; line-height: 20px; white-space: nowrap; }
.apps svg { display: block; width: 40px; height: 38px; margin: 2px auto 4px; }

.status { flex: none; height: 24px; display: flex; align-items: center; justify-content: flex-end; border-top: 1px solid #c9cfdf; background: #eee; font-size: 13px; white-space: nowrap; }
.status span { padding: 0 3px; border-right: 1px solid #d0d0d0; }
.status span:first-child { margin-right: 12px; }
.status .end { width: 28px; overflow: hidden; border: 0; padding-right: 0; }

/* dialog */
.dialog { position: absolute; left: 919px; right: -60px; top: 161px; background: #eee; border: 1px solid #5a5a5a; box-shadow: 0 4px 18px rgba(0, 0, 0, .4); font: 15px/20px "Noto Sans CJK SC", sans-serif; }
.dialog small, .tree { font: 13px/20px "Liberation Mono", "Noto Sans CJK SC", monospace; }
.dtitle { height: 37px; display: flex; align-items: center; gap: 6px; padding: 0 0 2px 9px; background: #fdfdfd; white-space: nowrap; }
.dtitle svg { width: 19px; height: 15px; }
.dbody { display: flex; padding: 8px 0 10px 6px; gap: 14px; }
.dleft { flex: none; width: 422px; }
.tree { height: 323px; display: flex; flex-direction: column; border: 1px solid #707580; background: #fdfdfd; padding: 1px; overflow: hidden; }
.node { display: flex; align-items: center; height: 20px; white-space: nowrap; overflow: hidden; }
.node label { display: flex; align-items: center; white-space: pre; }
.node span { font-size: 15px; }
.node svg { width: 16px; height: 14px; margin-right: 5px; }
.n1 { padding-left: 7px; }
.n2 { padding-left: 26px; }
.n3 { padding-left: 48px; }
.n3 label { background: #d5d5d5; height: 20px; padding-left: 2px; }
.ch { width: 6px; height: 6px; border: solid #444; border-width: 0 2px 2px 0; rotate: 45deg; margin: -3px 3px 0 1px; }
.dot { width: 5px; border-top: 1px dotted #888; }
.elbow { flex: none; width: 10px; height: 11px; align-self: flex-start; border: dotted #999; border-width: 0 0 1px 1px; }
input[type=checkbox] { appearance: none; flex: none; width: 15px; height: 15px; border: 1px solid #333; background: #fff; display: grid; place-items: center; margin-right: 5px; }
.n3 input[type=checkbox] { margin-right: 7px; }
input[type=checkbox]:checked::after { content: ""; width: 4px; height: 8px; border: solid #333; border-width: 0 1px 1px 0; rotate: 40deg; margin-top: -3px; }
.tscroll { flex: none; margin-top: auto; height: 20px; display: flex; background: #eee; }
.tscroll span { width: 304px; background: #cbcbcb; }
.tscroll button.lt { rotate: 180deg; }
.tscroll button:last-child { margin-left: auto; }
.ptype { display: flex; gap: 72px; padding: 12px 0 0 42px; }
.dright { flex: 1; min-width: 0; }
.dtabs { display: flex; align-items: flex-end; height: 23px; line-height: 18px; }
.dtabs button { width: 59px; height: 21px; text-align: left; padding-left: 6px; border: 1px solid #d9d9d9; border-width: 1px 1px 0 0; }
.dtabs .cur { width: 62px; height: 23px; background: #fdfdfd; padding-left: 8px; }
.page { height: 299px; background: #fdfdfd; border: 1px solid #d9d9d9; border-width: 0 0 1px 1px; padding: 15px 0 0 17px; }
.row { display: flex; align-items: center; white-space: nowrap; line-height: 18px; }
.row > :first-child { flex: none; width: 118px; }
.row .r { margin-left: 43px; display: flex; align-items: center; }
.r1 { margin-bottom: 15px; }
.r2 { margin-bottom: 28px; }
.r3, .r4 { margin-bottom: 13px; }
.row.r3 > :first-child { width: 117px; }
.row.r4 > :first-child { width: 139px; }
.row.r5 > :first-child { width: 205px; }
.drop { position: relative; width: 130px; height: 30px; display: flex; align-items: center; padding-left: 4px; border: 1px solid #a8a8a8; background: #dfdfdf; }
.drop::after { content: ""; position: absolute; right: 5px; top: 13px; border: 5px solid transparent; border-top: 6px solid #111; border-bottom: 0; }
.cust { font-family: "Liberation Mono", "Noto Sans CJK SC", monospace; font-size: 14px; }
.sw { width: 22px; height: 22px; margin-right: 7px; border: 1px solid #9a9a9a; background: #515151; }
.sw.many { background: linear-gradient(90deg, #ff0 20%, #00c800 20% 40%, #40ff40 40% 60%, #2434e0 60% 80%, #f01414 80%); }
.box { position: relative; display: block; height: 23px; border: 1px solid #777; background: #fff; }
.box select { appearance: none; width: 100%; height: 21px; padding-left: 3px; display: block; font: 15px/20px "Liberation Mono", monospace; }
.box::after { content: ""; position: absolute; right: 7px; top: 4px; width: 7px; height: 7px; border: solid #555; border-width: 0 1px 1px 0; rotate: 45deg; }
.w1 { width: 132px; }
.w2 { width: 86px; }
#ng { width: 116px; height: 23px; border: 1px solid #777; background: #fff; padding-left: 3px; font: 15px/20px "Liberation Mono", monospace; }
.actions { display: flex; padding-top: 13px; line-height: 18px; }
.actions button { flex: none; height: 26px; border: 1px solid #a8a8a8; background: #dfdfdf; }
.b1 { width: 36px; margin-right: 18px; }
.b2 { width: 96px; margin-right: 18px; }
.b3 { width: 72px; margin-right: 14px; }
.actions .b4 { width: 72px; margin-left: 6px; background: #c8c8c8; color: #888; text-align: left; padding-left: 8px; }

/* screen overlays */
.pulse { position: absolute; left: 1321px; top: 150px; width: 80px; height: 80px; border-radius: 50%; background: rgba(255, 96, 96, .5); }
.pointer { position: absolute; left: 1361px; top: 190px; width: 12px; height: 20px; }
.timer { position: absolute; left: 1533px; bottom: 67px; width: 45px; height: 45px; border: 2px solid #dcecfa; border-radius: 50%; background: radial-gradient(ellipse 30px 16px at 55% 98%, #7fd4fb 98%, transparent), linear-gradient(100deg, #62acf2, #3e8cf0); color: #fff; line-height: 41px; text-align: center; box-shadow: 0 1px 4px rgba(0, 0, 0, .3); }
.peek { position: absolute; right: 50px; top: 0; width: 355px; height: 2px; background: #d2d2d2; border-radius: 0 0 4px 4px; }
```
FILE: chart.js
```js
// Chord diagram: land-use transitions between six node groups.
const svg = document.getElementById('chord');
const CX = 490, CY = 561, OUTER = 271, INNER = 257, GAP = 3.6;
const nodes = [
  { total: 21168.6471, color: '#ffff00' },
  { total: 43127.8722, color: '#00e000' },
  { total: 4109.3847, color: '#40ff40' },
  { total: 1609.344, color: '#1a34ff' },
  { total: 2077.3586, color: '#ff0000' },
  { total: 24.3027, color: '#666666' }
];
const sum = nodes.reduce((s, n) => s + n.total, 0);
const perUnit = (360 - GAP * nodes.length) / sum;

const at = (deg, r) => {
  const a = deg * Math.PI / 180;
  return [CX + r * Math.sin(a), CY - r * Math.cos(a)];
};
const pt = (deg, r) => at(deg, r).map(v => v.toFixed(1)).join(' ');
function add(tag, attrs, text) {
  const el = document.createElementNS('http://www.w3.org/2000/svg', tag);
  for (const k in attrs) el.setAttribute(k, attrs[k]);
  if (text) el.textContent = text;
  svg.appendChild(el);
}
const arc = (a, b, r, sweep = 1) =>
  `A${r} ${r} 0 ${Math.abs(b - a) > 180 ? 1 : 0} ${sweep} ${pt(b, r)}`;

// [from start, from end, to start, to end, fill, line]
const Y = '#ffff00', G = '#00e000', L = '#40ff40', B = '#1a34ff', R = '#ff0000', K = '#777777';
const loops = [
  [0, 89.4, Y, Y], [102.93, 296.7, G, '#10a010'], [308.9, 325.1, L, '#30d030'],
  [331.78, 338.2, B, B], [342.93, 351.3, R, R]
];
const links = [
  [94, 97.9, 296.7, 302.25, Y, Y], [97.9, 98.15, 327.4, 327.75, Y, Y],
  [303.7, 304.5, 325.1, 327.4, G, '#10b810'],
  [98.15, 98.5, 338.5, 338.8, B, '#2a44d0'], [98.6, 98.9, 338.8, 339, B, '#5566a8'],
  [304.5, 304.8, 338.2, 338.5, B, B], [327.95, 328.1, 338.9, 339, B, B],
  [89.4, 94, 352.1, 352.6, R, R], [302.25, 303.7, 351.3, 351.6, R, R],
  [327.75, 327.95, 351.6, 351.8, R, R], [339, 339.3, 351.8, 352.1, R, R],
  [352.5, 352.68, 356.28, 356.3, R, R],
  [99.2, 99.22, 356.28, 356.3, K, 'none'], [305.1, 305.12, 356.3, 356.32, K, 'none'],
  [328.1, 328.12, 356.3, 356.34, K, 'none'], [339.3, 339.32, 356.34, 356.36, K, 'none'],
  [352.66, 352.68, 356.36, 356.4, K, 'none']
];
for (const [a, b, fill, line] of loops) {
  add('path', {
    d: `M${pt(a, INNER)}${arc(a, b, INNER)}Q${CX} ${CY} ${pt(a, INNER)}Z`,
    fill, 'fill-opacity': .6, stroke: line, 'stroke-opacity': line === Y ? .2 : .9
  });
}
for (const [a, b, c, d, fill, line] of links) {
  if (line === 'none') {
    // hairline link: a single curve is enough
    add('path', { d: `M${pt(a, INNER)}Q${CX} ${CY} ${pt(c, INNER)}`, fill: 'none', stroke: fill });
    continue;
  }
  add('path', {
    d: `M${pt(a, INNER)}${arc(a, b, INNER)}Q${CX} ${CY} ${pt(c, INNER)}${arc(c, d, INNER)}Q${CX} ${CY} ${pt(a, INNER)}Z`,
    fill, 'fill-opacity': .6, stroke: line, 'stroke-opacity': line === Y ? .5 : .8
  });
}

function tick(deg, len) {
  const [x1, y1] = at(deg, OUTER), [x2, y2] = at(deg, OUTER + len);
  add('line', { x1, y1, x2, y2, stroke: '#111' });
}
function label(deg, text) {
  const [x, y] = at(deg, OUTER + 7), s = Math.sin(deg * Math.PI / 180), c = Math.cos(deg * Math.PI / 180);
  add('text', {
    x: x.toFixed(0), y: (y - 6 * c + 4).toFixed(0), class: 'num',
    'text-anchor': Math.abs(s) < .36 ? 'middle' : s > 0 ? 'start' : 'end'
  }, text);
}
let start = 0;
for (const n of nodes) {
  const end = start + n.total * perUnit;
  add('path', {
    d: `M${pt(start, OUTER)}${arc(start, end, OUTER)}L${pt(end, INNER)}${arc(end, start, INNER, 0)}Z`,
    fill: n.color, 'fill-opacity': .8
  });
  add('path', { d: `M${pt(start, INNER)}${arc(start, end, INNER)}`, fill: 'none', stroke: '#515151', 'stroke-opacity': .7 });
  add('path', { d: `M${pt(start, OUTER)}${arc(start, end, OUTER)}`, fill: 'none', stroke: '#111', 'stroke-width': 1.5 });
  tick(start, 7);
  tick(end, 7);
  for (let v = 2500; v < n.total; v += 2500) {
    const deg = start + v * perUnit;
    tick(deg, v % 5000 ? 4 : 7);
    if (v % 5000 === 0) label(deg, String(v));
  }
  label(end, String(n.total));
  start = end + GAP;
}
for (const [x, y, name] of [[328, 242, '水域'], [242, 298, '草地'], [772, 333, '耕地'], [330, 892, '林地']]) {
  add('text', { x, y, class: 'name' }, name);
}
```
